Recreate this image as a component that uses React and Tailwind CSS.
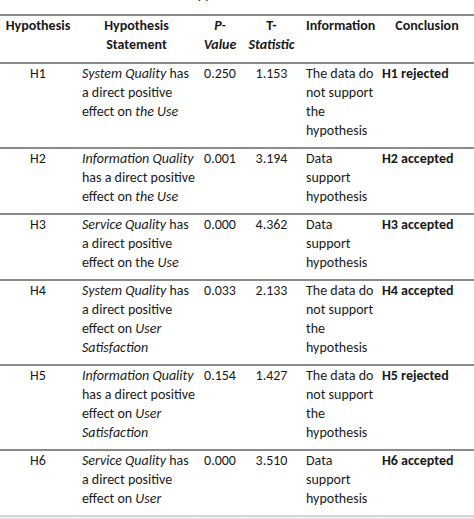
import React from 'react';

const cols = 'grid grid-cols-[76px_121px_46px_57px_78px_96px]';

const rows = [
	{
		id: 'H1',
		statement: [
			[<i key="a">System Quality</i>, ' has'],
			['a direct positive'],
			['effect on ', <i key="b">the Use</i>],
		],
		p: '0.250',
		t: '1.153',
		info: ['The data do', 'not support', 'the', 'hypothesis'],
		result: 'H1 rejected',
	},
	{
		id: 'H2',
		statement: [
			[<i key="a">Information Quality</i>],
			['has a direct positive'],
			['effect on ', <i key="b">the Use</i>],
		],
		p: '0.001',
		t: '3.194',
		info: ['Data', 'support', 'hypothesis'],
		result: 'H2 accepted',
	},
	{
		id: 'H3',
		statement: [
			[<i key="a">Service Quality</i>, ' has'],
			['a direct positive'],
			['effect on the ', <i key="b">Use</i>],
		],
		p: '0.000',
		t: '4.362',
		info: ['Data', 'support', 'hypothesis'],
		result: 'H3 accepted',
	},
	{
		id: 'H4',
		statement: [
			[<i key="a">System Quality</i>, ' has'],
			['a direct positive'],
			['effect on ', <i key="b">User</i>],
			[<i key="c">Satisfaction</i>],
		],
		p: '0.033',
		t: '2.133',
		info: ['The data do', 'not support', 'the', 'hypothesis'],
		result: 'H4 accepted',
	},
	{
		id: 'H5',
		statement: [
			[<i key="a">Information Quality</i>],
			['has a direct positive'],
			['effect on ', <i key="b">User</i>],
			[<i key="c">Satisfaction</i>],
		],
		p: '0.154',
		t: '1.427',
		info: ['The data do', 'not support', 'the', 'hypothesis'],
		result: 'H5 rejected',
	},
	{
		id: 'H6',
		statement: [
			[<i key="a">Service Quality</i>, ' has'],
			['a direct positive'],
			['effect on ', <i key="b">User</i>],
		],
		p: '0.000',
		t: '3.510',
		info: ['Data', 'support', 'hypothesis'],
		result: 'H6 accepted',
	},
];

function App() {
	return (
		<div className="w-[474px] h-[519px] overflow-hidden bg-white text-[#1a1a1a] font-[Carlito,Lato,sans-serif] text-[14px] leading-[19px]">
			{/* caption, only its descenders are left by the crop */}
			<div className="h-[14px] overflow-hidden">
				<div className="-mt-[15px] pl-[184px] whitespace-nowrap">Support</div>
			</div>

			<div className={`${cols} border-t-2 border-[#8a8a8a] pb-[8px] font-bold`}>
				<div className="text-center">Hypothesis</div>
				<div className="text-center">
					Hypothesis
					<br />
					Statement
				</div>
				<div className="text-center italic">
					P-
					<br />
					Value
				</div>
				<div className="text-center">
					T-
					<br />
					<i>Statistic</i>
				</div>
				<div className="pl-[6px]">Information</div>
				<div className="text-center pl-[2px]">Conclusion</div>
			</div>

			{rows.map((r) => (
				<div key={r.id} className={`${cols} border-t-2 border-[#8a8a8a] pb-[7px]`}>
					<div className="text-center">{r.id}</div>
					<div className="pl-[6px] whitespace-nowrap">
						{r.statement.map((line, i) => (
							<div key={i}>{line}</div>
						))}
					</div>
					<div className="text-center">{r.p}</div>
					<div className="text-center">{r.t}</div>
					<div className="pl-[6px] whitespace-nowrap">
						{r.info.map((line, i) => (
							<div key={i}>{line}</div>
						))}
					</div>
					<div className="pl-[4px] font-bold whitespace-nowrap">{r.result}</div>
				</div>
			))}

			<div className={`${cols} h-[6px] border-t-2 border-[#d9d9d9] bg-[#ececec]`}>
				<div className="border-r border-[#f7f7f7]"></div>
				<div className="border-r border-[#f7f7f7]"></div>
				<div className="border-r border-[#f7f7f7]"></div>
				<div className="border-r border-[#f7f7f7]"></div>
				<div className="border-r border-[#f7f7f7]"></div>
				<div></div>
			</div>
		</div>
	);
}

export default App;
